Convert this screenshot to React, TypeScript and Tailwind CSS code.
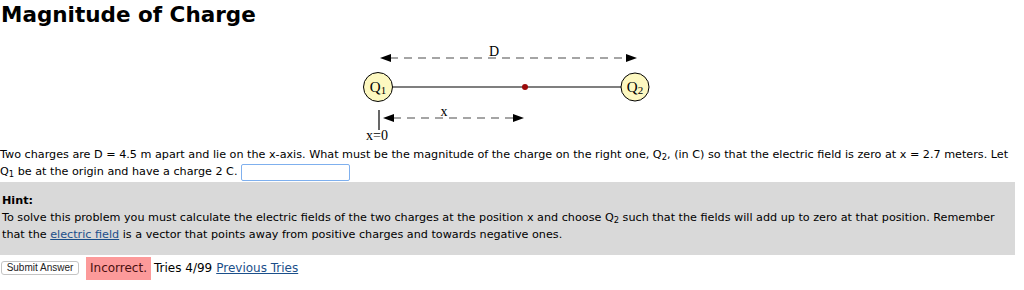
import React, { useState } from 'react';

const ChargeDiagram = () => (
  <svg width="294" height="108" viewBox="0 0 294 108" className="block">
    {/* flecha D */}
    <line x1="29" y1="20" x2="266" y2="20" stroke="#888" strokeWidth="1.3" strokeDasharray="8 6" />
    <polygon points="19,20 30,16 30,24" fill="#000" />
    <polygon points="276,20 265,16 265,24" fill="#000" />
    <text x="133" y="18" fontFamily="'Liberation Serif', serif" fontSize="14" textAnchor="middle" fill="#000">
      D
    </text>

    {/* eje de las cargas */}
    <line x1="31" y1="49" x2="260" y2="49" stroke="#000" strokeWidth="1.2" />
    <circle cx="17" cy="49" r="14.5" fill="#fdf8c0" stroke="#000" strokeWidth="1" />
    <circle cx="274" cy="49" r="14" fill="#fdf8c0" stroke="#000" strokeWidth="1" />
    <circle cx="164" cy="49" r="3" fill="#9b0a0a" />
    <text x="17" y="54" fontFamily="'Liberation Serif', serif" fontSize="15" textAnchor="middle" fill="#000">
      Q<tspan fontSize="11" dy="2">1</tspan>
    </text>
    <text x="274" y="54" fontFamily="'Liberation Serif', serif" fontSize="15" textAnchor="middle" fill="#000">
      Q<tspan fontSize="11" dy="2">2</tspan>
    </text>

    {/* flecha x */}
    <line x1="18" y1="72" x2="18" y2="92" stroke="#000" strokeWidth="1.2" />
    <line x1="32" y1="80" x2="153" y2="80" stroke="#888" strokeWidth="1.3" strokeDasharray="8 6" />
    <polygon points="22,80 33,76 33,84" fill="#000" />
    <polygon points="163,80 152,76 152,84" fill="#000" />
    <text x="83" y="78" fontFamily="'Liberation Serif', serif" fontSize="14" textAnchor="middle" fill="#000">
      x
    </text>
    <text x="5" y="102" fontFamily="'Liberation Serif', serif" fontSize="14" fill="#000">
      x=0
    </text>
  </svg>
);

const App = () => {
  const [answer, setAnswer] = useState('');

  return (
    <div className="w-[1015px] bg-white text-black font-['DejaVu_Sans',Verdana,sans-serif] text-[11.2px] leading-[17px]">
      <h1 className="text-[21.5px] font-bold leading-[30px] pl-px">Magnitude of Charge</h1>

      <div className="flex justify-center mt-[8px]">
        <ChargeDiagram />
      </div>

      <p>
        Two charges are D = 4.5 m apart and lie on the x-axis. What must be the magnitude of the charge on the right
        one, Q<sub>2</sub>, (in C) so that the electric field is zero at x = 2.7 meters. Let Q<sub>1</sub> be at the
        origin and have a charge 2 C.{' '}
        <input
          type="text"
          value={answer}
          onChange={(e) => setAnswer(e.target.value)}
          className="w-[109px] h-[17px] align-middle border border-[#7fb0ee] rounded-[2px] outline-none px-1 bg-white"
        />
      </p>

      <div className="bg-[#d9d9d9] mt-[1px] pt-[10px] pb-[12px] px-[2px]">
        <p className="font-bold">Hint:</p>
        <p>
          To solve this problem you must calculate the electric fields of the two charges at the position x and choose
          Q<sub>2</sub> such that the fields will add up to zero at that position. Remember that the{' '}
          <a href="#" className="text-[#1b4f8a] underline">
            electric field
          </a>{' '}
          is a vector that points away from positive charges and towards negative ones.
        </p>
      </div>

      <div className="flex items-center h-[27px]">
        <button
          type="button"
          className="ml-px w-[78px] h-[14px] font-['Liberation_Sans',Arial,sans-serif] text-[10px] leading-[12px] text-[#222] border border-[#c4c4c4] rounded-[3px] bg-white flex items-center justify-center"
        >
          Submit Answer
        </button>
        <span className="ml-[7px] h-[23px] px-[4px] flex items-center bg-[#fc9a9a] text-[#4a1010] text-[12px]">
          Incorrect.
        </span>
        <span className="ml-[3px] text-[12px]">Tries 4/99</span>
        <a href="#" className="ml-[4px] text-[12px] text-[#1b4f8a] underline">
          Previous Tries
        </a>
      </div>
    </div>
  );
};

export default App;
